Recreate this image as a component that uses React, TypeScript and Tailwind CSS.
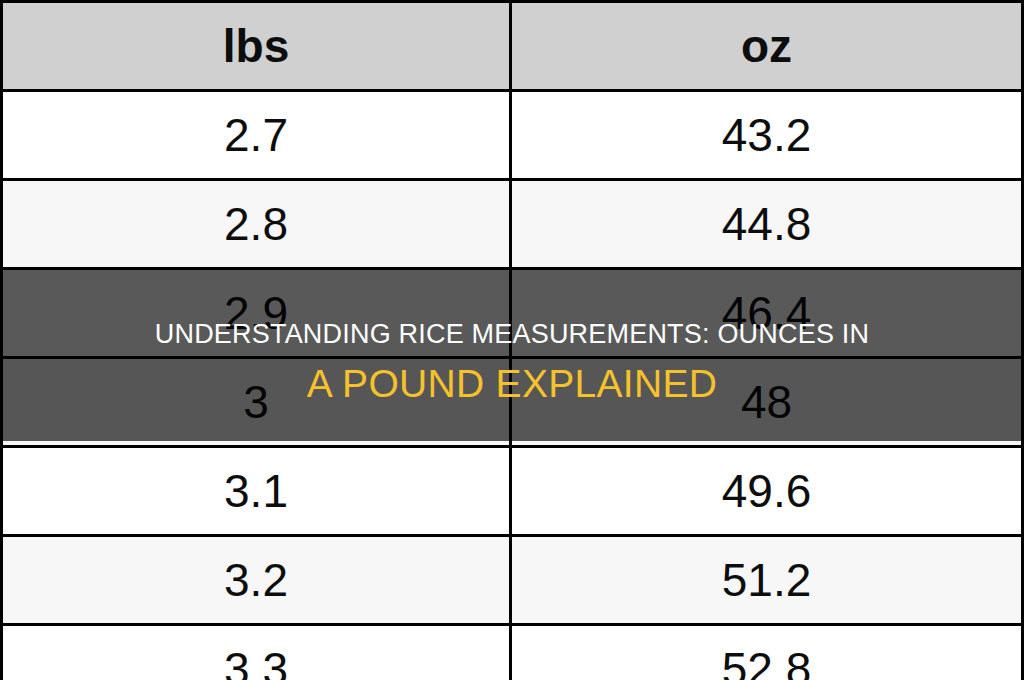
const ROWS = [
  { lbs: "2.7", oz: "43.2" },
  { lbs: "2.8", oz: "44.8" },
  { lbs: "2.9", oz: "46.4" },
  { lbs: "3", oz: "48" },
  { lbs: "3.1", oz: "49.6" },
  { lbs: "3.2", oz: "51.2" },
  { lbs: "3.3", oz: "52.8" },
];

export default function App() {
  return (
    <div
      className="relative w-[1024px] h-[680px] overflow-hidden bg-white"
      style={{ fontFamily: '"Liberation Sans", Arial, sans-serif' }}
    >
      {/* Conversion table */}
      <div className="flex flex-col border-[3px] border-black text-[#0d0d0d] text-[46px]">
        <div className="grid grid-cols-[506px_3px_1fr] h-[86px] bg-[#d0d0d0] font-bold">
          <div className="flex items-center justify-center leading-[86px]">lbs</div>
          <div className="bg-black" />
          <div className="flex items-center justify-center leading-[86px]">oz</div>
        </div>
        {ROWS.map((row, i) => (
          <div
            key={row.lbs}
            className={`grid grid-cols-[506px_3px_1fr] h-[89px] border-t-[3px] border-black ${
              i % 2 === 0 ? "bg-white" : "bg-[#f7f7f7]"
            }`}
          >
            <div className="flex items-center justify-center leading-[86px]">{row.lbs}</div>
            <div className="bg-black" />
            <div className="flex items-center justify-center leading-[86px]">{row.oz}</div>
          </div>
        ))}
      </div>

      {/* Title band */}
      <div className="absolute left-0 right-0 top-[268px] h-[173px] bg-black/65 flex flex-col items-center pt-[50px]">
        <div className="text-white text-[27px] tracking-[0.2px] leading-[32px] whitespace-nowrap">
          UNDERSTANDING RICE MEASUREMENTS: OUNCES IN
        </div>
        <div className="mt-[11px] text-[#f6c22b] text-[39px] tracking-[0.3px] leading-[45px] whitespace-nowrap">
          A POUND EXPLAINED
        </div>
      </div>
    </div>
  );
}
